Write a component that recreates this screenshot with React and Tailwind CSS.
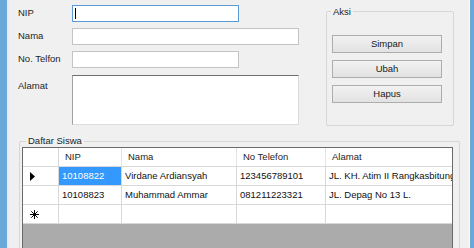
import React from "react";

const font = { fontFamily: '"Liberation Sans", Arial, sans-serif' };

function Arrow() {
  return (
    <svg width="6" height="9" viewBox="0 0 6 9">
      <path d="M0 0 L5 4.5 L0 9 Z" fill="#000" />
    </svg>
  );
}

function Star() {
  return (
    <svg width="9" height="9" viewBox="0 0 9 9" stroke="#000" strokeWidth="1">
      <line x1="4.5" y1="0" x2="4.5" y2="9" />
      <line x1="0" y1="4.5" x2="9" y2="4.5" />
      <line x1="1.3" y1="1.3" x2="7.7" y2="7.7" />
      <line x1="7.7" y1="1.3" x2="1.3" y2="7.7" />
    </svg>
  );
}

function Btn({ children, className = "" }) {
  return (
    <div
      className={`h-[18px] w-[110px] flex items-center justify-center border border-[#adadad] bg-gradient-to-b from-[#f2f2f2] to-[#e2e2e2] text-[#1a1a1a] ${className}`}
    >
      {children}
    </div>
  );
}

const cols = ["w-[36px]", "w-[63px]", "w-[115px]", "w-[89px]", "flex-1"];

function Row({ cells, first, selected }) {
  return (
    <div className="flex h-[19px] border-b border-[#d8d8d8] bg-white">
      <div className={`${cols[0]} shrink-0 border-r border-[#d8d8d8] flex items-center pl-[7px]`}>
        {first}
      </div>
      {cells.map((c, i) => (
        <div
          key={i}
          className={`${cols[i + 1]} ${i < 3 ? "shrink-0 border-r border-[#d8d8d8]" : "min-w-0"} flex items-center pl-[3px] overflow-hidden whitespace-nowrap ${
            selected && i === 0 ? "bg-[#3399ff] text-white" : "text-[#111]"
          }`}
        >
          {c}
        </div>
      ))}
    </div>
  );
}

export default function App() {
  return (
    <div
      className="w-[474px] h-[248px] flex overflow-hidden bg-[#f0f0f0] text-[9.5px] text-[#1e1e1e]"
      style={font}
    >
      <div className="w-[7px] shrink-0 bg-[#6aa8d8]" />
      <div className="w-[2px] shrink-0 bg-[#e6ecf1]" />
      <div className="flex-1 flex flex-col min-w-0">
        {/* Top section */}
        <div className="flex h-[126px]">
          <div className="flex flex-col pl-[9px] pt-[5px]">
            <div className="flex h-[17px]">
              <div className="w-[54px] flex items-center">NIP</div>
              <div className="w-[167px] border border-[#5a9bd8] bg-white flex items-center pl-[2px]">
                <div className="w-px h-[11px] bg-black" />
              </div>
            </div>
            <div className="flex h-[17px] mt-[6px]">
              <div className="w-[54px] flex items-center">Nama</div>
              <div className="w-[227px] border border-[#c4c4c4] bg-white" />
            </div>
            <div className="flex h-[17px] mt-[6px]">
              <div className="w-[54px] flex items-center">No. Telfon</div>
              <div className="w-[167px] border border-[#c4c4c4] bg-white" />
            </div>
            <div className="flex h-[50px] mt-[7px]">
              <div className="w-[54px] pt-[4px]">Alamat</div>
              <div className="w-[227px] border border-[#dcdcdc] border-t-[#6e6e6e] border-l-[#a0a0a0] bg-white" />
            </div>
          </div>
          <div className="ml-[27px] mt-[11px] w-[128px] h-[115px] border border-[#d6d6d6] rounded-[2px] relative flex flex-col items-start pl-[5px] pt-[23px] gap-[7px]">
            <div className="absolute left-[4px] top-[-6px] px-[2px] bg-[#f0f0f0] leading-[11px]">Aksi</div>
            <Btn>Simpan</Btn>
            <Btn>Ubah</Btn>
            <Btn>Hapus</Btn>
          </div>
        </div>

        {/* Daftar Siswa */}
        <div className="mt-[15px] ml-[10px] mr-[9px] flex-1 border border-b-0 border-[#d6d6d6] rounded-t-[2px] relative pt-[5px] pl-[2px] pr-[6px]">
          <div className="absolute left-[6px] top-[-7px] px-[2px] bg-[#f0f0f0] leading-[12px]">Daftar Siswa</div>
          <div className="h-[120px] border border-[#6a6a6a] bg-[#ababab] flex flex-col">
            <div className="flex h-[19px] border-b border-[#d8d8d8] bg-white">
              <div className={`${cols[0]} shrink-0 border-r border-[#d8d8d8]`} />
              {["NIP", "Nama", "No Telefon", "Alamat"].map((h, i) => (
                <div
                  key={h}
                  className={`${cols[i + 1]} ${i < 3 ? "shrink-0 border-r border-[#e4e4e4]" : ""} flex items-center pl-[6px]`}
                >
                  {h}
                </div>
              ))}
            </div>
            <Row first={<Arrow />} selected cells={["10108822", "Virdane Ardiansyah", "123456789101", "JL. KH. Atim II Rangkasbitung"]} />
            <Row cells={["10108823", "Muhammad Ammar", "081211223321", "JL. Depag No 13 L."]} />
            <Row first={<Star />} cells={["", "", "", ""]} />
          </div>
        </div>
      </div>
      <div className="w-[1px] shrink-0 bg-[#fafafa]" />
      <div className="w-[4px] shrink-0 bg-[#6aa8d8]" />
    </div>
  );
}
